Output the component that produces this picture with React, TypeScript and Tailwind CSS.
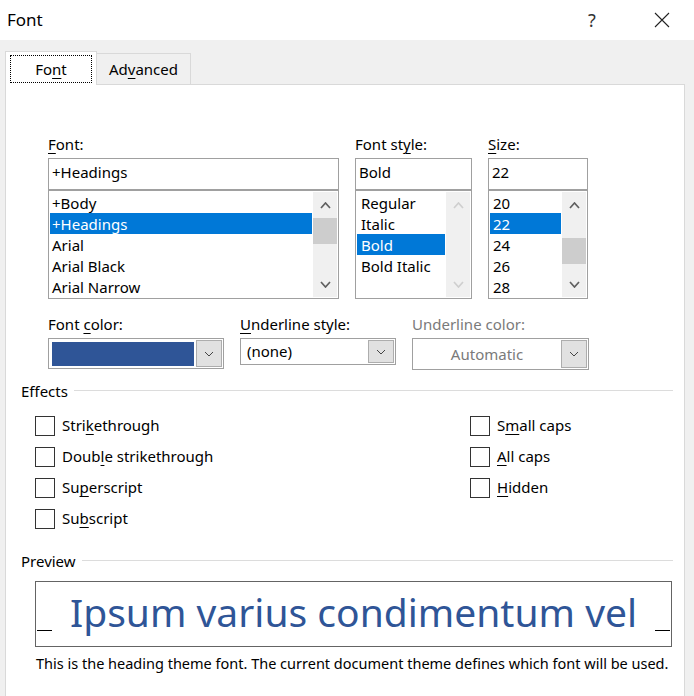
import React from "react";

function Key({ children }: { children: React.ReactNode }) {
  return <span className="underline underline-offset-[3px] decoration-1">{children}</span>;
}

function Chevron({ up, color, w = 11, h = 7, sw = 1.7 }: { up?: boolean; color: string; w?: number; h?: number; sw?: number }) {
  const d = up ? `M1 ${h - 1} L${w / 2} 1 L${w - 1} ${h - 1}` : `M1 1 L${w / 2} ${h - 1} L${w - 1} 1`;
  return (
    <svg width={w} height={h} viewBox={`0 0 ${w} ${h}`}>
      <path d={d} fill="none" stroke={color} strokeWidth={sw} />
    </svg>
  );
}

type ListProps = {
  items: string[];
  selected: number;
  pad: string;
  thumb?: string;
  disabled?: boolean;
};

function ListBox({ items, selected, pad, thumb, disabled }: ListProps) {
  const arrow = disabled ? "#cfcfcf" : "#606060";
  return (
    <div className="h-[109px] border border-[#a0a0a0] p-px flex">
      <div className="flex-1 flex flex-col">
        {items.map((it, i) => (
          <div
            key={it}
            className={`h-[21px] leading-[22px] ${pad} ${i === selected ? "bg-[#0078d7] text-white" : "text-black"}`}
          >
            {it}
          </div>
        ))}
      </div>
      <div className="w-[24px] ml-px bg-[#f0f0f0] flex flex-col">
        <div className="h-[26px] flex items-center justify-center">
          <Chevron up color={arrow} />
        </div>
        {thumb ? <div className={`h-[26px] bg-[#cdcdcd] ${thumb}`} /> : null}
        <div className="flex-1" />
        <div className="h-[25px] flex items-center justify-center">
          <Chevron color={arrow} />
        </div>
      </div>
    </div>
  );
}

function DropBtn({ h }: { h: string }) {
  return (
    <div className={`w-[26px] ${h} bg-[#e1e1e1] border border-[#adadad] flex items-center justify-center`}>
      <Chevron color="#444" w={10} h={6} sw={1} />
    </div>
  );
}

function Check({ children }: { children: React.ReactNode }) {
  return (
    <div className="h-[31px] flex items-center">
      <div className="w-[20px] h-[20px] border border-[#333] bg-white" />
      <span className="ml-[7px]">{children}</span>
    </div>
  );
}

export default function App() {
  return (
    <div className="w-[694px] h-[696px] overflow-hidden bg-[#f0f0f0] text-[15px] text-black font-['Noto_Sans','Open_Sans',sans-serif]">
      {/* title bar */}
      <div className="h-[40px] bg-white flex items-center pl-[7px]">
        <span className="text-[17px] flex-1">Font</span>
        <span className="text-[18px] text-[#333] w-[20px] text-center mr-[52px]">?</span>
        <svg width="16" height="16" viewBox="0 0 16 16" className="mr-[24px]">
          <path d="M1 1 L15 15 M15 1 L1 15" stroke="#222" strokeWidth="1.1" />
        </svg>
      </div>

      {/* tabs */}
      <div className="pt-[11px] pl-[5px] h-[44px] flex items-end">
        <div className="relative z-10 w-[92px] h-[34px] -mb-px bg-white border-t border-l border-r border-[#d9d9d9] pl-[4px] pt-[3px]">
          <div className="w-[82px] h-[28px] border border-dotted border-black flex items-center justify-center">
            Fo<Key>n</Key>t
          </div>
        </div>
        <div className="w-[94px] h-[31px] border-t border-r border-[#d9d9d9] flex items-center justify-center">
          Ad<Key>v</Key>anced
        </div>
      </div>

      {/* panel */}
      <div className="ml-[5px] w-[680px] h-[700px] bg-white border border-[#d9d9d9]">
        <div className="pt-[49px] pl-[42px] flex gap-[16px]">
          <div className="w-[291px]">
            <div className="h-[20px] leading-[20px] mb-[4px]">
              <Key>F</Key>ont:
            </div>
            <div className="h-[32px] border border-[#a0a0a0] pl-[3px] pb-[3px] flex items-center">+Headings</div>
            <ListBox
              items={["+Body", "+Headings", "Arial", "Arial Black", "Arial Narrow"]}
              selected={1}
              pad="pl-[2px]"
              thumb="mt-0"
            />
          </div>
          <div className="w-[117px]">
            <div className="h-[20px] leading-[20px] mb-[4px]">
              Font st<Key>y</Key>le:
            </div>
            <div className="h-[32px] border border-[#a0a0a0] pl-[3px] pb-[3px] flex items-center">Bold</div>
            <ListBox items={["Regular", "Italic", "Bold", "Bold Italic"]} selected={2} pad="pl-[4px]" disabled />
          </div>
          <div className="w-[100px]">
            <div className="h-[20px] leading-[20px] mb-[4px]">
              <Key>S</Key>ize:
            </div>
            <div className="h-[32px] border border-[#a0a0a0] pl-[3px] pb-[3px] flex items-center">22</div>
            <ListBox items={["20", "22", "24", "26", "28"]} selected={1} pad="pl-[3px]" thumb="mt-[20px]" />
          </div>
        </div>

        <div className="mt-[15px] pl-[42px] flex gap-[16px] items-start">
          <div className="w-[176px]">
            <div className="h-[20px] leading-[20px] mb-[4px]">
              Font <Key>c</Key>olor:
            </div>
            <div className="mt-px h-[31px] border border-[#a0a0a0] flex items-center pl-[3px] pr-px">
              <div className="w-[143px] h-[24px] bg-[#2f5597]" />
              <div className="ml-[2px]">
                <DropBtn h="h-[27px]" />
              </div>
            </div>
          </div>
          <div className="w-[156px]">
            <div className="h-[20px] leading-[20px] mb-[4px]">
              <Key>U</Key>nderline style:
            </div>
            <div className="h-[27px] border border-[#a0a0a0] flex items-center pl-[6px] pr-px">
              <span className="flex-1">(none)</span>
              <DropBtn h="h-[23px]" />
            </div>
          </div>
          <div className="w-[177px] text-[#7a7a7a]">
            <div className="h-[20px] leading-[20px] mb-[4px]">Underline color:</div>
            <div className="h-[32px] border border-[#a0a0a0] flex items-center pr-px">
              <span className="flex-1 text-center">Automatic</span>
              <DropBtn h="h-[28px]" />
            </div>
          </div>
        </div>

        {/* effects */}
        <div className="mt-[11px] pl-[15px] pr-[11px] h-[20px] flex items-center gap-[6px]">
          <span>Effects</span>
          <div className="flex-1 h-px bg-[#dcdcdc] -mt-[1px]" />
        </div>
        <div className="mt-[9px] pl-[29px] flex">
          <div className="w-[435px]">
            <Check>
              Stri<Key>k</Key>ethrough
            </Check>
            <Check>
              Doub<Key>l</Key>e strikethrough
            </Check>
            <Check>
              Su<Key>p</Key>erscript
            </Check>
            <Check>
              Su<Key>b</Key>script
            </Check>
          </div>
          <div>
            <Check>
              S<Key>m</Key>all caps
            </Check>
            <Check>
              <Key>A</Key>ll caps
            </Check>
            <Check>
              <Key>H</Key>idden
            </Check>
          </div>
        </div>

        {/* preview */}
        <div className="mt-[17px] pl-[15px] pr-[11px] h-[20px] flex items-center gap-[6px]">
          <span>Preview</span>
          <div className="flex-1 h-px bg-[#dcdcdc] -mt-[1px]" />
        </div>
        <div className="mt-[10px] ml-[29px] w-[637px] h-[66px] border border-[#646464] flex items-end pb-[15px] px-px">
          <div className="w-[15px] h-px bg-black" />
          <div className="flex-1 text-center text-[39px] leading-[39px] text-[#2f5597] mb-0">
            Ipsum varius condimentum vel
          </div>
          <div className="w-[15px] h-px bg-black" />
        </div>
        <div className="mt-[6px] ml-[30px] h-[20px] leading-[20px] text-[14.5px]">
          This is the heading theme font. The current document theme defines which font will be used.
        </div>
      </div>
    </div>
  );
}
